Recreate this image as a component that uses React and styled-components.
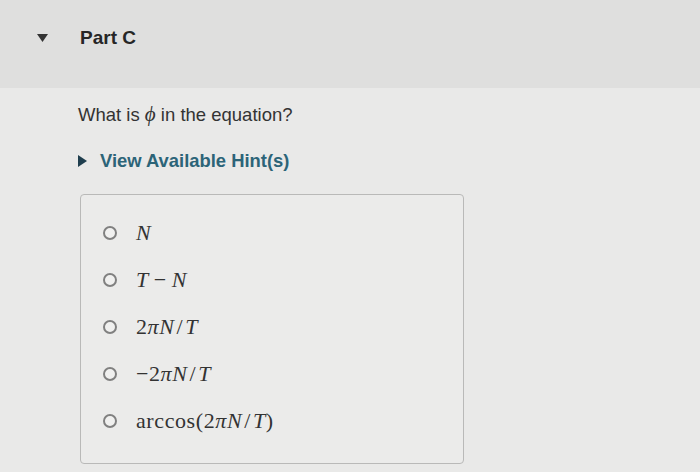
import styled, { createGlobalStyle } from "styled-components"

const Global = createGlobalStyle`
  html, body {
    margin: 0;
    padding: 0;
    background: #e8e8e7;
  }
  body {
    font-family: "Liberation Sans", Arial, sans-serif;
  }
`;

const Page = styled.div`
  width: 700px;
  height: 472px;
  overflow: hidden;
  background: #e9e9e8;
`;

const Header = styled.div`
  height: 88px;
  display: flex;
  align-items: center;
  padding-left: 37px;
  box-sizing: border-box;
  background: #dfdfde;
  padding-bottom: 12px;
`;

const Caret = styled.svg`
  width: 11px;
  height: 8px;
  margin-right: 32px;
  fill: #333;
`;

const PartTitle = styled.h2`
  margin: 0;
  font-size: 19px;
  font-weight: bold;
  color: #262626;
`;

const Body = styled.div`
  padding: 15px 0 0 78px;
`;

const Question = styled.p`
  margin: 0;
  font-size: 18.5px;
  color: #333;
  line-height: 22px;
`;

const Phi = styled.span`
  font-family: "Liberation Serif", "DejaVu Serif", serif;
  font-style: italic;
  font-size: 21px;
`;

const Hint = styled.div`
  display: flex;
  align-items: center;
  margin-top: 24px;
  font-size: 18.4px;
  font-weight: bold;
  color: #2c6478;
`;

const HintArrow = styled.svg`
  width: 9px;
  height: 12px;
  margin-right: 13px;
  fill: #1f3e4e;
`;

const Choices = styled.div`
  margin: 22px 0 0 2px;
  width: 384px;
  height: 270px;
  box-sizing: border-box;
  border: 1px solid #b9b9b8;
  border-radius: 4px;
  background: #ebebea;
  padding: 26px 0 0 22px;
  display: flex;
  flex-direction: column;
  gap: 23px;
`;

const Choice = styled.label`
  display: flex;
  align-items: center;
  height: 24px;
  gap: 19px;
`;

const Radio = styled.span`
  width: 10px;
  height: 10px;
  border: 2px solid #808080;
  border-radius: 50%;
  background: #f0f0ef;
  flex: none;
`;

const MathText = styled.span`
  font-family: "Liberation Serif", "DejaVu Serif", serif;
  font-size: 22px;
  letter-spacing: 0.6px;
  color: #333;
  white-space: pre;
`;

const I = styled.i`
  font-style: italic;
`;

const Op = styled.span`
  margin: 0 ${(p) => p.$space}px;
`;

const choices = [
  <><I>N</I></>,
  <><I>T</I><Op $space={5}>−</Op><I>N</I></>,
  <>2<I>π</I><I>N</I><Op $space={2}>/</Op><I>T</I></>,
  <>−2<I>π</I><I>N</I><Op $space={2}>/</Op><I>T</I></>,
  <>arccos(2<I>π</I><I>N</I><Op $space={2}>/</Op><I>T</I>)</>,
];

export default function App() {
  return (
    <Page>
      <Global />
      <Header>
        <Caret viewBox="0 0 11 8"><path d="M0 0h11L5.5 8z" /></Caret>
        <PartTitle>Part C</PartTitle>
      </Header>
      <Body>
        <Question>What is <Phi>ϕ</Phi> in the equation?</Question>
        <Hint>
          <HintArrow viewBox="0 0 9 12"><path d="M0 0l9 6-9 6z" /></HintArrow>
          View Available Hint(s)
        </Hint>
        <Choices>
          {choices.map((c, i) => (
            <Choice key={i}>
              <Radio />
              <MathText>{c}</MathText>
            </Choice>
          ))}
        </Choices>
      </Body>
    </Page>
  )
}
